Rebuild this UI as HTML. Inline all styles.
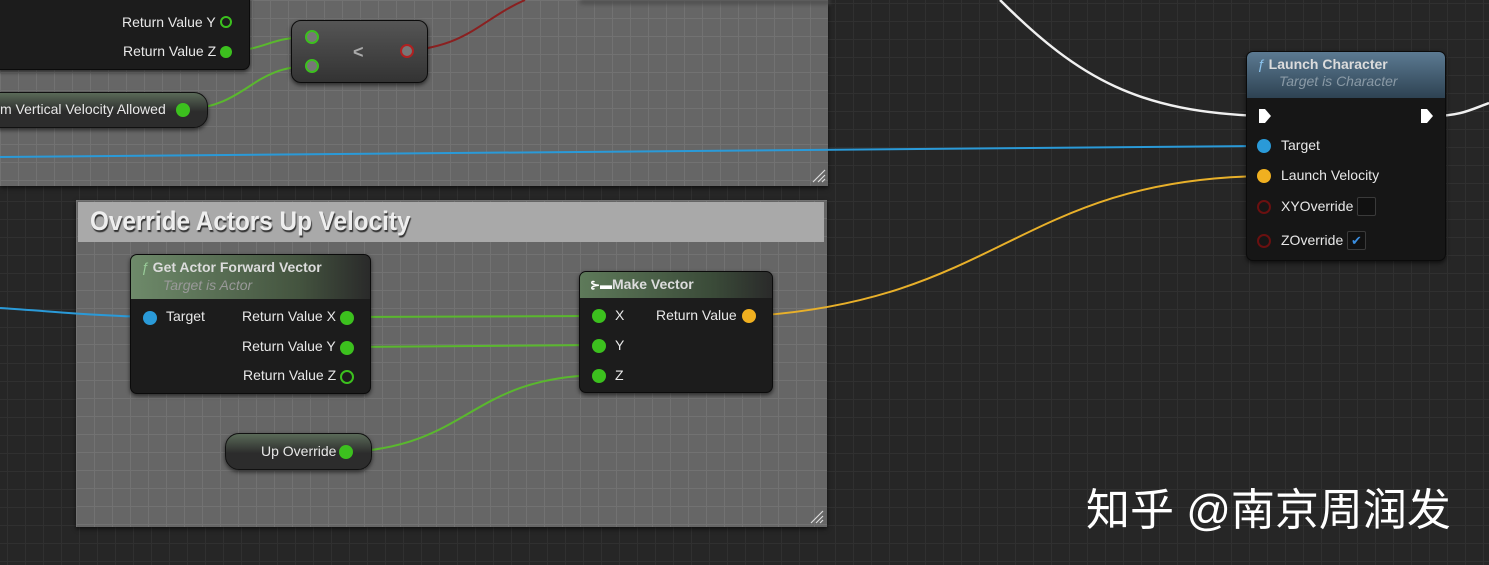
<!DOCTYPE html>
<html><head><meta charset="utf-8"><style>
*{margin:0;padding:0;box-sizing:border-box}
body{width:1489px;height:565px;overflow:hidden;position:relative;font-family:"Liberation Sans","Noto Sans CJK SC",sans-serif;
background-color:#262626;
background-image:linear-gradient(#303030 1px,transparent 1px),linear-gradient(90deg,#303030 1px,transparent 1px),linear-gradient(#1a1a1a 1px,transparent 1px),linear-gradient(90deg,#1a1a1a 1px,transparent 1px);
background-size:18px 18px,18px 18px,144px 144px,144px 144px;background-position:7px 3px,7px 3px,7px 3px,7px 3px}
.cm{position:absolute;background-color:#666;background-image:linear-gradient(#727272 1px,transparent 1px),linear-gradient(90deg,#727272 1px,transparent 1px);background-size:18px 18px;box-shadow:0 2px 4px rgba(0,0,0,.6)}
.node{position:absolute;background:#1c1c1c;border-radius:7px;border:1px solid #0b0b0b;box-shadow:0 2px 4px rgba(0,0,0,.6);color:#e6e6e6;font-size:14px}
.hdr{border-radius:6px 6px 0 0;padding:4px 0 0 10px;font-weight:bold;font-size:14px;color:#dcdcdc}
.sub{font-style:italic;font-weight:normal;color:#999;padding-left:22px}
.t{position:absolute;font-size:14px;color:#e8e8e8;white-space:nowrap}
.pin{position:absolute;width:12px;height:12px;border-radius:50%}
.var{position:absolute;border-radius:14px;background:linear-gradient(#5a6a58,#2c2c2c 55%);border:1px solid #111;box-shadow:0 2px 4px rgba(0,0,0,.6);color:#eee;font-size:14px}
</style></head><body>
<div class="cm" style="left:0;top:0;width:828px;height:186px"></div>
<div class="cm" style="left:76px;top:200px;width:751px;height:327px"></div>
<div style="position:absolute;left:78px;top:202px;width:746px;height:40px;background:#a9a9a9"></div>
<div style="position:absolute;left:90px;top:206px;font-size:27px;font-weight:bold;color:#eee;text-shadow:1px 2px 1px #333;transform:scaleX(.9);transform-origin:left">Override Actors Up Velocity</div>
<div style="position:absolute;left:580px;top:0;width:250px;height:4px;background:#4a4a4a;filter:blur(2px)"></div>

<svg style="position:absolute;left:0;top:0" width="1489" height="565">
<path d="M0 157 L1260 146" stroke="#2a9ad8" stroke-width="2" fill="none"/>
<path d="M0 308 C60 312 100 316 150 317" stroke="#2a9ad8" stroke-width="2" fill="none"/>
<path d="M230 52 C270 48 270 37 312 37" stroke="#5ab82e" stroke-width="2" fill="none"/>
<path d="M185 110 C250 105 250 66 312 66" stroke="#5ab82e" stroke-width="2" fill="none"/>
<path d="M407 51 C470 45 480 20 525 0" stroke="#8a2020" stroke-width="2" fill="none"/>
<path d="M350 317 L598 316" stroke="#5ab82e" stroke-width="2" fill="none"/>
<path d="M350 347 L598 345" stroke="#5ab82e" stroke-width="2" fill="none"/>
<path d="M350 452 C470 445 470 378 598 375" stroke="#5ab82e" stroke-width="2" fill="none"/>
<path d="M752 316 C1000 300 1020 180 1262 176" stroke="#e8b02a" stroke-width="2" fill="none"/>
<path d="M1000 0 C1080 80 1140 112 1262 116" stroke="#f0f0f0" stroke-width="2.5" fill="none"/>
<path d="M1432 116 C1460 116 1470 110 1489 103" stroke="#f0f0f0" stroke-width="2.5" fill="none"/>
<path d="M813 182 L825 170 M818 182 L825 175 M822 182 L825 179" stroke="#ddd" stroke-width="1.2"/>
<path d="M811 523 L823 511 M816 523 L823 516 M820 523 L823 520" stroke="#ddd" stroke-width="1.2"/>
</svg>

<div class="node" style="left:-10px;top:-10px;width:260px;height:80px;border-radius:0 0 7px 0"></div>
<div class="t" style="left:122px;top:14px">Return Value Y</div>
<div class="pin" style="left:220px;top:16px;border:2px solid #3cc01e"></div>
<div class="t" style="left:123px;top:43px">Return Value Z</div>
<div class="pin" style="left:220px;top:46px;background:#3cc01e"></div>

<div class="node" style="left:291px;top:20px;width:137px;height:63px;background:linear-gradient(#555,#333);border-radius:10px"></div>
<div class="pin" style="left:305px;top:30px;border:2px solid #3cc01e;background:#777;width:14px;height:14px"></div>
<div class="pin" style="left:305px;top:59px;border:2px solid #3cc01e;background:#777;width:14px;height:14px"></div>
<div class="t" style="left:353px;top:42px;font-size:18px;font-weight:bold;color:#aaa">&lt;</div>
<div class="pin" style="left:400px;top:44px;border:2px solid #b02020;background:#777;width:14px;height:14px"></div>

<div class="var" style="left:-20px;top:92px;width:228px;height:36px"></div>
<div class="t" style="left:0;top:101px">m Vertical Velocity Allowed</div>
<div class="pin" style="left:176px;top:103px;background:#3cc01e;width:14px;height:14px"></div>

<div class="node" style="left:130px;top:254px;width:241px;height:140px">
<div class="hdr" style="height:44px;background:linear-gradient(90deg,#6e8a6a,#44543f 70%,#2a2a2a)"><span style="color:#9c9;font-style:italic;font-weight:normal">ƒ</span> Get Actor Forward Vector<div class="sub" style="margin-top:2px">Target is Actor</div></div></div>
<div class="pin" style="left:143px;top:311px;background:#2a9ad8;width:14px;height:14px"></div>
<div class="t" style="left:166px;top:308px">Target</div>
<div class="t" style="left:242px;top:308px">Return Value X</div><div class="pin" style="left:340px;top:311px;background:#3cc01e;width:14px;height:14px"></div>
<div class="t" style="left:242px;top:338px">Return Value Y</div><div class="pin" style="left:340px;top:341px;background:#3cc01e;width:14px;height:14px"></div>
<div class="t" style="left:243px;top:367px">Return Value Z</div><div class="pin" style="left:340px;top:370px;border:2px solid #3cc01e;width:14px;height:14px"></div>

<div class="node" style="left:579px;top:271px;width:194px;height:122px">
<div class="hdr" style="height:26px;background:linear-gradient(90deg,#5e7a5a,#3a4a38 70%,#2a2a2a);padding-left:32px">Make Vector</div></div>
<div style="position:absolute;left:590px;top:278px;color:#fff;font-size:12px;font-weight:bold">⊱▬</div>
<div class="pin" style="left:592px;top:309px;background:#3cc01e;width:14px;height:14px"></div><div class="t" style="left:615px;top:307px">X</div>
<div class="pin" style="left:592px;top:339px;background:#3cc01e;width:14px;height:14px"></div><div class="t" style="left:615px;top:337px">Y</div>
<div class="pin" style="left:592px;top:369px;background:#3cc01e;width:14px;height:14px"></div><div class="t" style="left:615px;top:367px">Z</div>
<div class="t" style="left:656px;top:307px">Return Value</div><div class="pin" style="left:742px;top:309px;background:#f0b020;width:14px;height:14px"></div>

<div class="var" style="left:225px;top:433px;width:147px;height:37px"></div>
<div class="t" style="left:261px;top:443px">Up Override</div>
<div class="pin" style="left:339px;top:445px;background:#3cc01e;width:14px;height:14px"></div>

<div class="node" style="left:1246px;top:51px;width:200px;height:210px;background:#161616">
<div class="hdr" style="height:46px;background:linear-gradient(#5c7a92,#2e4252)"><span style="color:#8cc4ee;font-style:italic;font-weight:normal">ƒ</span> Launch Character<div class="sub" style="margin-top:1px;color:#8a9aa6">Target is Character</div></div></div>
<svg style="position:absolute;left:1258px;top:108px" width="14" height="16"><path d="M1 1H7L13 8L7 15H1Z" fill="#fff"/></svg>
<svg style="position:absolute;left:1420px;top:108px" width="14" height="16"><path d="M1 1H7L13 8L7 15H1Z" fill="#fff"/></svg>
<div class="pin" style="left:1257px;top:139px;background:#2a9ad8;width:14px;height:14px"></div><div class="t" style="left:1281px;top:137px">Target</div>
<div class="pin" style="left:1257px;top:169px;background:#f0b020;width:14px;height:14px"></div><div class="t" style="left:1281px;top:167px">Launch Velocity</div>
<div class="pin" style="left:1257px;top:200px;border:2px solid #6a1010;width:14px;height:14px"></div><div class="t" style="left:1281px;top:198px">XYOverride</div>
<div style="position:absolute;left:1357px;top:197px;width:19px;height:19px;border:1px solid #3a3a3a;background:#111;border-radius:2px"></div>
<div class="pin" style="left:1257px;top:234px;border:2px solid #6a1010;width:14px;height:14px"></div><div class="t" style="left:1281px;top:232px">ZOverride</div>
<div style="position:absolute;left:1347px;top:231px;width:19px;height:19px;border:1px solid #3a3a3a;background:#111;border-radius:2px;color:#3a8ee0;font-size:13px;text-align:center;line-height:18px">✔</div>

<div style="position:absolute;left:1086px;top:474px;font-size:44px;color:#fff;font-family:'Liberation Sans','Noto Sans CJK SC',sans-serif;white-space:nowrap">知乎 @南京周润发</div>
</body></html>
